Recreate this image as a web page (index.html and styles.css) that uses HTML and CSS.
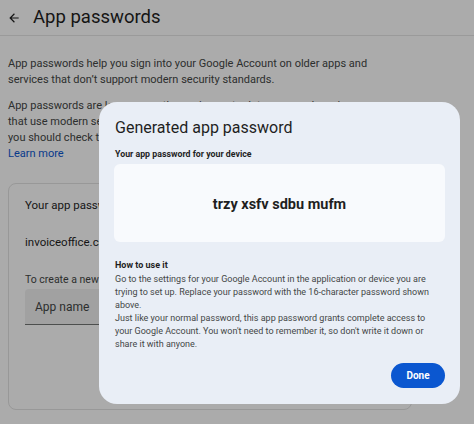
FILE: index.html
```html
<!DOCTYPE html>
<html lang="en">
<head>
<meta charset="utf-8">
<title>App passwords</title>
<link rel="stylesheet" href="styles.css">
</head>
<body>
<div class="page">
  <header class="topbar">
    <svg class="back" viewBox="0 0 24 24" width="14" height="14" aria-hidden="true"><path d="M20 11H7.83l5.59-5.59L12 4l-8 8 8 8 1.41-1.41L7.83 13H20v-2z" fill="#1f1f1f"/></svg>
    <h1 class="title">App passwords</h1>
  </header>
  <main class="content">
    <p class="para">App passwords help you sign into your Google Account on older apps and services that don’t support modern security standards.</p>
    <p class="para para2">App passwords are less secure than using up-to-date apps and services that use modern security standards. Before you create an app password, you should check to see if your app needs this in order to sign in.<br><a class="link" href="#">Learn more</a></p>
    <section class="card">
      <div class="card-title">Your app passwords</div>
      <div class="card-row">invoiceoffice.com</div>
      <div class="card-hint">To create a new app specific password, type a name for it below...</div>
      <div class="input">App name</div>
    </section>
  </main>
  <div class="scrim"></div>
  <div class="dialog">
    <h2 class="dlg-title">Generated app password</h2>
    <div class="dlg-label">Your app password for your device</div>
    <div class="pw-box"><span class="pw">trzy xsfv sdbu mufm</span></div>
    <div class="howto">
      <div class="howto-title">How to use it</div>
      <p class="howto-text">Go to the settings for your Google Account in the application or device you are trying to set up. Replace your password with the 16-character password shown above.</p>
      <p class="howto-text">Just like your normal password, this app password grants complete access to your Google Account. You won't need to remember it, so don't write it down or share it with anyone.</p>
    </div>
    <div class="actions"><button class="done">Done</button></div>
  </div>
</div>
</body>
</html>
```
FILE: styles.css
```css
* { box-sizing: border-box; }
html, body { margin: 0; padding: 0; }
body {
  width: 474px;
  height: 424px;
  overflow: hidden;
  font-family: Roboto, "Noto Sans", sans-serif;
  background: #fff;
}
.page {
  position: relative;
  width: 474px;
  height: 424px;
  overflow: hidden;
  background: #fff;
}
.topbar {
  height: 36px;
  display: flex;
  align-items: center;
  gap: 12px;
  padding-left: 7px;
  border-bottom: 1px solid #e6e6e6;
}
.back { flex: none; }
.title {
  margin: 0;
  font-size: 18.5px;
  font-weight: 400;
  color: #1f1f1f;
  line-height: 24px;
  position: relative;
  top: -1px;
}
.content {
  padding: 0 8px;
}
.para {
  margin: 20px 0 0;
  font-size: 11px;
  line-height: 16px;
  color: #444746;
  width: 360px;
}
.para + .para { margin-top: 9px; }
.para2 { padding-top: 1px; }
.link {
  color: #0b57d0;
  text-decoration: none;
}
.card {
  margin-top: 21px;
  width: 404px;
  height: 227px;
  border: 1px solid #e3e3e3;
  border-radius: 8px;
  padding: 13px 16px 0;
  color: #1f1f1f;
  font-size: 11.5px;
  line-height: 16px;
  white-space: nowrap;
  overflow: hidden;
}
.card-row { margin-top: 21px; }
.card-hint { margin-top: 22px; font-size: 10.5px; color: #444746; }
.input {
  margin-top: 1px;
  width: 360px;
  height: 36px;
  background: #f0f0f0;
  border-bottom: 1px solid #747775;
  border-radius: 4px 4px 0 0;
  padding: 10px 10px 0;
  font-size: 12px;
  color: #444746;
}
.scrim {
  position: absolute;
  inset: 0;
  background: rgba(0, 0, 0, 0.33);
}
.dialog {
  position: absolute;
  left: 99px;
  top: 102px;
  width: 361px;
  height: 302px;
  border-radius: 18px;
  background: #e9eef6;
  padding: 15px 15px 0 16px;
  display: flex;
  flex-direction: column;
  color: #1f1f1f;
}
.dlg-title {
  margin: 0;
  font-size: 16px;
  font-weight: 400;
  line-height: 22px;
}
.dlg-label {
  margin-top: 9px;
  font-size: 8.8px;
  font-weight: 700;
  line-height: 12px;
  color: #1f1f1f;
}
.pw-box {
  margin-top: 4px;
  margin-left: -1px;
  height: 78px;
  border-radius: 6px;
  background: #f8fafd;
  display: flex;
  align-items: center;
  justify-content: center;
}
.pw {
  font-size: 14.5px;
  font-weight: 700;
  color: #1f1f1f;
  position: relative;
  top: 1px;
}
.howto {
  margin-top: 17px;
  font-size: 9px;
  line-height: 13px;
  color: #444746;
}
.howto-title {
  font-weight: 700;
  color: #1f1f1f;
  line-height: 12px;
  margin-bottom: 2px;
}
.howto-text { margin: 0; width: 322px; }
.actions {
  margin-top: auto;
  margin-bottom: 16px;
  display: flex;
  justify-content: flex-end;
}
.done {
  width: 54px;
  height: 25px;
  border: none;
  border-radius: 13px;
  background: #0b57d0;
  color: #fff;
  font-family: Roboto, sans-serif;
  font-size: 10px;
  font-weight: 700;
  padding: 0;
}
```
